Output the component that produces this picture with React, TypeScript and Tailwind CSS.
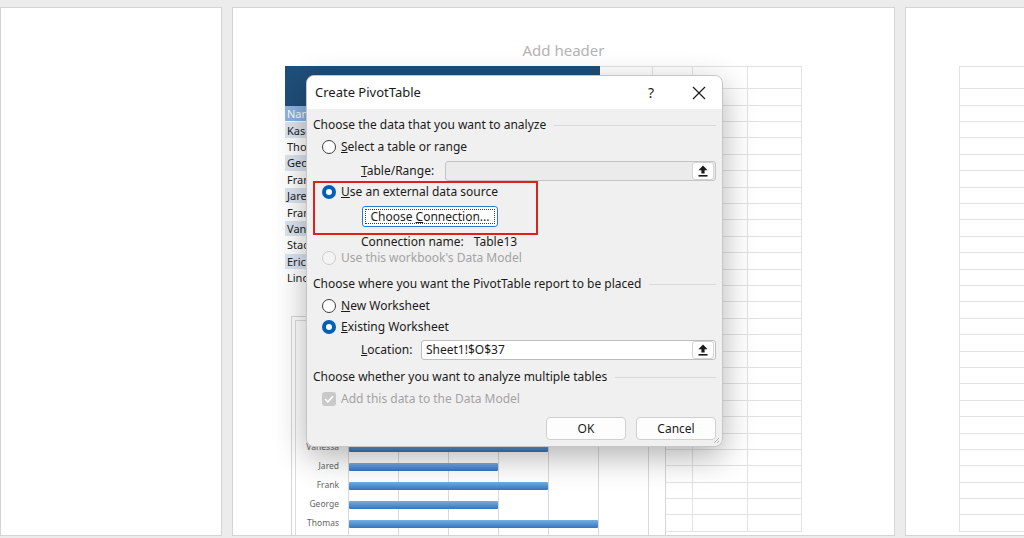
import React from "react";

const font = { fontFamily: '"Noto Sans", "Open Sans", Arial, sans-serif' };

const names = ["Name", "Kasey", "Thomas", "George", "Frank", "Jared", "Frank", "Vanessa", "Stacy", "Eric", "Linda"];

// rows in the chart, top to bottom; value = units of 50px
// the upper rows sit under the dialog, so their labels are left out
const chartRows = [
  { label: "", value: 3 },
  { label: "", value: 4 },
  { label: "", value: 2 },
  { label: "", value: 5 },
  { label: "", value: 3 },
  { label: "Vanessa", value: 4 },
  { label: "Jared", value: 3 },
  { label: "Frank", value: 4 },
  { label: "George", value: 3 },
  { label: "Thomas", value: 5 },
];

const rowCount = Array.from({ length: 27 });

function GridColumn({ className }: { className: string }) {
  return (
    <div className={`flex flex-col border-r border-[#e2e2e2] ${className}`}>
      <div className="h-[23.3px] border-t border-b border-[#e2e2e2]" />
      {rowCount.map((_, i) => (
        <div key={i} className="h-[16.4px] shrink-0 border-b border-[#e2e2e2]" />
      ))}
    </div>
  );
}

function UploadIcon() {
  return (
    <svg width="10" height="12" viewBox="0 0 10 12">
      <path d="M5 0.5 L9.6 5.2 H6.6 V8.6 H3.4 V5.2 H0.4 Z" fill="#1a1a1a" />
      <rect x="0.5" y="10" width="9" height="1.6" fill="#1a1a1a" />
    </svg>
  );
}

function Radio({ checked, disabled }: { checked?: boolean; disabled?: boolean }) {
  if (checked) {
    return (
      <span className="w-[14px] h-[14px] rounded-full bg-[#005fb8] flex items-center justify-center shrink-0">
        <span className="w-[6px] h-[6px] rounded-full bg-white" />
      </span>
    );
  }
  return (
    <span
      className={`w-[14px] h-[14px] rounded-full border shrink-0 ${
        disabled ? "border-[#cdcdcd] bg-[#f4f4f4]" : "border-[#3c3c3c] bg-white"
      }`}
    />
  );
}

function Heading({ text }: { text: string }) {
  return (
    <div className="h-[16px] flex items-center gap-[8px]">
      <span className="whitespace-nowrap">{text}</span>
      <div className="flex-1 h-px bg-[#d9d9d9]" />
    </div>
  );
}

function RangeInput({ value, disabled }: { value?: string; disabled?: boolean }) {
  return (
    <div
      className={`flex-1 h-[20px] flex items-center border rounded-[3px] ${
        disabled ? "border-[#c4c4c4] bg-[#ebebeb]" : "border-[#bdbdbd] bg-white"
      }`}
    >
      <span className="flex-1 pl-[4px] leading-none">{value}</span>
      <div className="w-[22px] h-[18px] mr-px flex items-center justify-center bg-white border border-[#d4d4d4] rounded-[3px]">
        <UploadIcon />
      </div>
    </div>
  );
}

function Dialog() {
  return (
    <div
      className="absolute left-[306px] top-[75px] w-[417px] h-[372px] flex flex-col rounded-[8px] border border-[#c6c6c6] bg-[#f0f0f0] overflow-hidden shadow-[0_10px_32px_rgba(0,0,0,0.3)] text-[12px] text-[#1b1b1b]"
      style={font}
    >
      {/* title bar */}
      <div className="h-[33px] shrink-0 bg-white flex items-center pl-[8px]">
        <span className="text-[13px] flex-1">Create PivotTable</span>
        <span className="text-[14px] mr-[38px]">?</span>
        <svg width="14" height="14" viewBox="0 0 14 14" className="mr-[16px]">
          <path d="M1 1 L13 13 M13 1 L1 13" stroke="#1a1a1a" strokeWidth="1.2" />
        </svg>
      </div>

      <div className="flex flex-col px-[6px]">
        <div className="mt-[8px]">
          <Heading text="Choose the data that you want to analyze" />
        </div>
        <div className="mt-[6px] h-[16px] flex items-center gap-[5px] pl-[9px]">
          <Radio />
          <span>
            <span className="underline">S</span>elect a table or range
          </span>
        </div>
        <div className="mt-[6px] flex items-center">
          <div className="w-[132px] pl-[48px]">
            <span className="underline">T</span>able/Range:
          </div>
          <RangeInput disabled />
        </div>

        {/* highlighted option */}
        <div className="w-[225px] h-[54px] border-2 border-[#e0201b] pt-px flex flex-col">
          <div className="h-[16px] flex items-center gap-[5px] pl-[7px]">
            <Radio checked />
            <span>
              <span className="underline">U</span>se an external data source
            </span>
          </div>
          <div className="ml-[47px] mt-[6px] w-[136px] h-[21px] p-[2px] rounded-[3px] border border-[#2a7bd0] bg-white flex">
            <div className="flex-1 border border-dotted border-[#3a3a3a] flex items-center justify-center leading-none">
              Choose <span className="underline ml-[3px]">C</span>onnection...
            </div>
          </div>
        </div>

        <div className="h-[13px] pl-[48px] flex items-center gap-[10px] leading-none">
          <span>Connection name:</span>
          <span>Table13</span>
        </div>
        <div className="mt-[2px] h-[16px] flex items-center gap-[5px] pl-[9px] text-[#a3a3a3]">
          <Radio disabled />
          <span>Use this workbook's Data Model</span>
        </div>

        <div className="mt-[10px]">
          <Heading text="Choose where you want the PivotTable report to be placed" />
        </div>
        <div className="mt-[6px] h-[16px] flex items-center gap-[5px] pl-[9px]">
          <Radio />
          <span>
            <span className="underline">N</span>ew Worksheet
          </span>
        </div>
        <div className="mt-[5px] h-[16px] flex items-center gap-[5px] pl-[9px]">
          <Radio checked />
          <span>
            <span className="underline">E</span>xisting Worksheet
          </span>
        </div>
        <div className="mt-[5px] flex items-center">
          <div className="w-[108px] pl-[48px]">
            <span className="underline">L</span>ocation:
          </div>
          <RangeInput value="Sheet1!$O$37" />
        </div>

        <div className="mt-[9px]">
          <Heading text="Choose whether you want to analyze multiple tables" />
        </div>
        <div className="mt-[6px] h-[16px] flex items-center gap-[5px] pl-[9px] text-[#a3a3a3]">
          <span className="w-[14px] h-[14px] rounded-[3px] bg-[#c9c9c9] flex items-center justify-center">
            <svg width="10" height="8" viewBox="0 0 10 8">
              <path d="M1 4 L3.8 6.8 L9 1.2" stroke="white" strokeWidth="1.5" fill="none" />
            </svg>
          </span>
          <span>Add this data to the Data Model</span>
        </div>

        <div className="mt-[10px] flex justify-end gap-[10px]">
          <button className="w-[80px] h-[23px] rounded-[4px] border border-[#d0d0d0] bg-[#fdfdfd] leading-none">OK</button>
          <button className="w-[80px] h-[23px] rounded-[4px] border border-[#d0d0d0] bg-[#fdfdfd] leading-none">Cancel</button>
        </div>
      </div>
      <svg width="8" height="8" viewBox="0 0 8 8" className="absolute right-[2px] bottom-[2px]">
        <path d="M7 2 L2 7 M7 5 L5 7" stroke="#b5b5b5" strokeWidth="1" />
      </svg>
    </div>
  );
}

function Chart() {
  return (
    <div className="absolute left-[58px] top-[308px] w-[375px] h-[240px] bg-white border border-[#d6d6d6]">
      <div className="mt-[3px] ml-[3px] h-full border-l border-t border-[#dcdcdc] pt-[22px] flex">
        <div className="w-[43px] flex flex-col">
          {chartRows.map((r, i) => (
            <div key={i} className="h-[19px] flex items-center justify-end text-[8.5px] text-[#666]">
              {r.label}
            </div>
          ))}
        </div>
        <div className="ml-[9px] w-[301px] flex flex-col bg-[repeating-linear-gradient(to_right,#d9d9d9_0_1px,transparent_1px_50px)]">
          {chartRows.map((r, i) => (
            <div key={i} className="h-[19px] flex items-center">
              <div
                className="ml-px h-[8px] rounded-[1px] bg-gradient-to-b from-[#73aee3] to-[#3575bd]"
                style={{ width: r.value * 50 - 1 }}
              />
            </div>
          ))}
        </div>
      </div>
    </div>
  );
}

export default function App() {
  return (
    <div className="w-[1024px] h-[538px] relative overflow-hidden bg-[#ececec] flex pt-[7px]" style={font}>
      {/* left page */}
      <div className="w-[222px] h-[529px] shrink-0 bg-white border border-[#d4d4d4]" />

      {/* middle page */}
      <div className="ml-[10px] w-[663px] h-[529px] shrink-0 relative bg-white border border-[#d4d4d4] overflow-hidden flex flex-col">
        <div className="h-[58px] shrink-0 flex items-end justify-center pb-[5px] text-[15px] text-[#b3b3b3]">
          Add header
        </div>
        <div className="flex ml-[52px]">
          <div className="w-[315px] shrink-0 flex flex-col">
            <div className="h-[40px] bg-[#1f4e79]" />
            <div className="w-[62px] flex flex-col text-[11px] leading-none">
              {names.map((n, i) => (
                <div
                  key={i}
                  className={`h-[16.4px] pl-[2px] flex items-center border-b border-white ${
                    i === 0 ? "bg-[#8db3e2] text-white" : i % 2 === 1 ? "bg-[#dbe5f1] text-[#222]" : "bg-white text-[#222]"
                  }`}
                >
                  {n}
                </div>
              ))}
            </div>
          </div>
          <GridColumn className="w-[53px]" />
          <GridColumn className="w-[40px]" />
          <GridColumn className="w-[55px]" />
          <GridColumn className="w-[54px]" />
        </div>
        <Chart />
      </div>

      {/* right page */}
      <div className="ml-[10px] w-[200px] h-[529px] shrink-0 bg-white border border-[#d4d4d4] pt-[58px] pl-[53px]">
        <div className="flex">
          <GridColumn className="w-[120px] border-l" />
        </div>
      </div>

      <Dialog />
    </div>
  );
}
